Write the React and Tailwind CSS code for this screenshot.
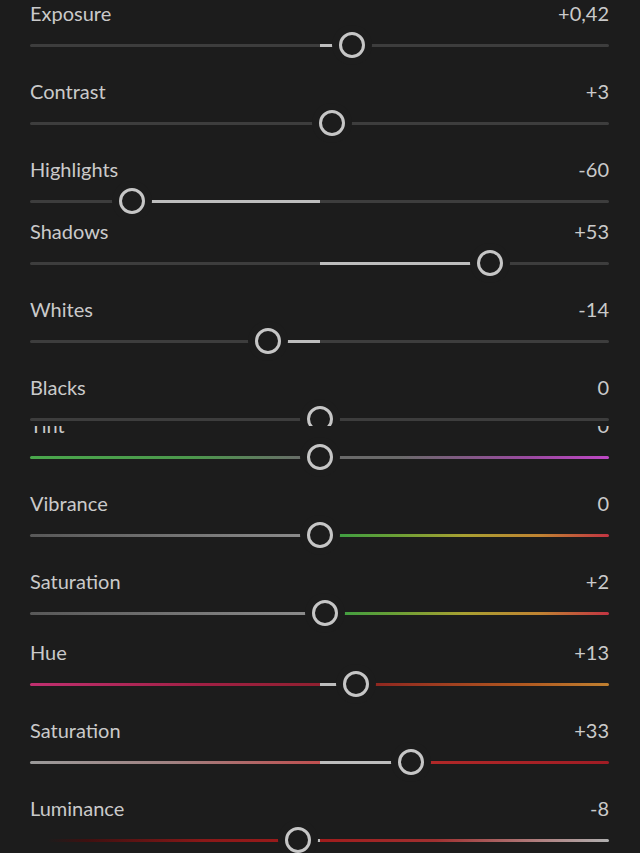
import React from 'react';

const PLAIN = 'bg-[#3d3d3d]';
const VIBE = 'bg-[linear-gradient(to_right,#585858_0%,#8c8c8c_48%,#3e9e42_53%,#6aa036_63%,#a8a032_75%,#c08432_88%,#c23442_100%)]';

const sections = [
  {
    h: 'h-[218px]',
    shift: 'mt-0',
    rows: [
      { label: 'Exposure', value: '+0,42', x: 352, track: PLAIN },
      { label: 'Contrast', value: '+3', x: 332, track: PLAIN },
      { label: 'Highlights', value: '-60', x: 132, track: PLAIN },
    ],
  },
  {
    h: 'h-[208px]',
    shift: 'mt-0',
    rows: [
      { label: 'Shadows', value: '+53', x: 490, track: PLAIN },
      { label: 'Whites', value: '-14', x: 268, track: PLAIN },
      { label: 'Blacks', value: '0', x: 320, track: PLAIN },
    ],
  },
  {
    h: 'h-[213px]',
    shift: '-mt-[14px]',
    rows: [
      {
        label: 'Tint', value: '0', x: 320,
        track: 'bg-[linear-gradient(to_right,#4aa84c_0%,#4c984c_28%,#6a6a6a_48%,#6a6a6a_64%,#9a4aa0_86%,#be48c4_100%)]',
      },
      { label: 'Vibrance', value: '0', x: 320, track: VIBE },
      { label: 'Saturation', value: '+2', x: 325, track: VIBE },
    ],
  },
  {
    h: 'h-[214px]',
    shift: 'mt-0',
    rows: [
      {
        label: 'Hue', value: '+13', x: 356,
        track: 'bg-[linear-gradient(to_right,#c03070_0%,#a02044_30%,#902030_50%,#902820_60%,#b05820_85%,#c08030_100%)]',
      },
      {
        label: 'Saturation', value: '+33', x: 411,
        track: 'bg-[linear-gradient(to_right,#9a9a9a_0%,#a08080_25%,#c05050_50%,#b02828_70%,#a01c24_100%)]',
      },
      {
        label: 'Luminance', value: '-8', x: 298,
        track: 'bg-[linear-gradient(to_right,transparent_3%,#401010_10%,#8a1818_30%,#a01c1c_50%,#a03030_70%,#b08080_88%,#b0b0b0_100%)]',
      },
    ],
  },
];

const CENTER = 320;

function Slider({ x, track }) {
  const from = Math.min(CENTER, x) - 30;
  const to = Math.max(CENTER, x) - 30;
  return (
    <div className="relative h-[26px] mt-[6px]">
      <div className={`absolute left-0 right-0 top-[11.5px] h-[3px] rounded-full ${track}`} />
      <div
        className="absolute top-[11.5px] h-[3px] bg-[#bdbdbd]"
        style={{ left: from, width: to - from }}
      />
      <div
        className="absolute top-0 w-[26px] h-[26px] rounded-full border-[3px] border-[#c6c6c6] bg-[#1c1c1c] shadow-[0_0_0_7px_#1c1c1c]"
        style={{ left: x - 30 - 13 }}
      />
    </div>
  );
}

function Row({ label, value, x, track }) {
  return (
    <div className="h-[78px] pl-[30px] pr-[31px]">
      <div className="flex items-center justify-between h-[26px] text-[20px] text-[#cacaca]">
        <span>{label}</span>
        <span>{value}</span>
      </div>
      <Slider x={x} track={track} />
    </div>
  );
}

export default function App() {
  return (
    <div className="w-[640px] h-[853px] overflow-hidden bg-[#1c1c1c] font-['Lato',sans-serif]">
      {sections.map((s, i) => (
        <div key={i} className={`${s.h} overflow-hidden`}>
          <div className={s.shift}>
            {s.rows.map((r) => (
              <Row key={r.label + r.value} {...r} />
            ))}
          </div>
        </div>
      ))}
    </div>
  );
}
